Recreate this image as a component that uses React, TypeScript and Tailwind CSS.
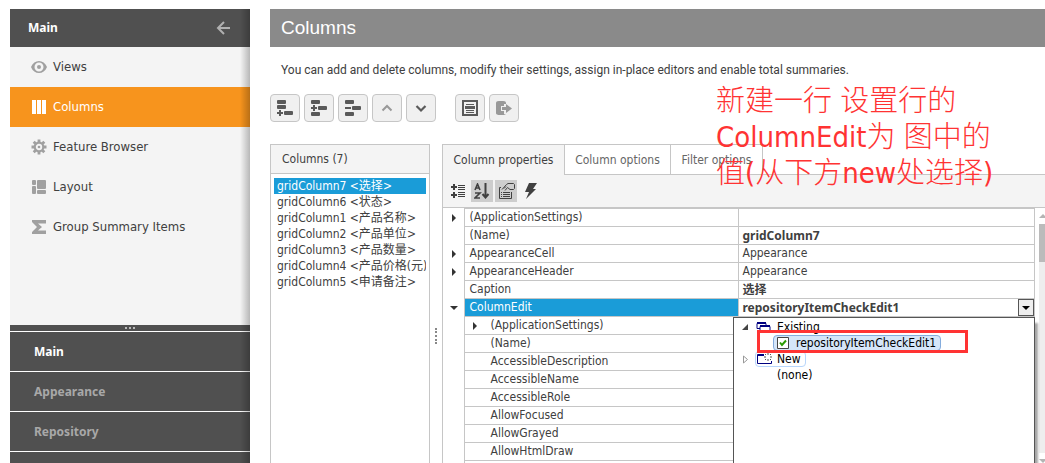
import type { ReactNode } from "react";

const cx = (...c: (string | false)[]) => c.filter(Boolean).join(" ");

const nav: { label: string; icon: ReactNode; active?: boolean }[] = [
  {
    label: "Views",
    icon: (
      <path fillRule="evenodd" d="M0 8C3 0 13 0 16 8C13 16 3 16 0 8ZM8 3.5A4.5 4.5 0 1 0 8 12.5A4.5 4.5 0 1 0 8 3.5ZM8 6A2 2 0 1 1 8 10A2 2 0 1 1 8 6Z" />
    ),
  },
  { label: "Columns", active: true, icon: <path d="M1 1h4v14H1zM6 1h4v14H6zM11 1h4v14h-4z" /> },
  {
    label: "Feature Browser",
    icon: (
      <>
        <circle cx="8" cy="8" r="4.3" fill="none" stroke="currentColor" strokeWidth="2.2" />
        <circle cx="8" cy="8" r="1.3" />
        <g stroke="currentColor" strokeWidth="2.8">
          <path d="M8 .5v3M8 12.500v3M.5 8h3M12.500 8h3M2.700 2.700l2 2M11.300 11.300l2 2M13.300 2.700l-2 2M4.700 11.300l-2 2" />
        </g>
      </>
    ),
  },
  {
    label: "Layout",
    icon: (
      <>
        <rect x="1" y="1" width="4" height="5" rx="1" />
        <rect x="1" y="7" width="4" height="8" rx="1" />
        <rect x="6" y="1" width="9" height="9" rx="1" />
        <rect x="6" y="11" width="9" height="4" rx="1" />
      </>
    ),
  },
  { label: "Group Summary Items", icon: <path d="M1 1h14v3.500H7L11 8l-4 3.500h8V15H1v-2l5-5-5-5z" /> },
];

const columns = [
  ["gridColumn7", "选择"],
  ["gridColumn6", "状态"],
  ["gridColumn1", "产品名称"],
  ["gridColumn2", "产品单位"],
  ["gridColumn3", "产品数量"],
  ["gridColumn4", "产品价格(元)"],
  ["gridColumn5", "申请备注"],
];

type Row = { name: string; value?: string; bold?: boolean; arrow?: "right" | "down"; child?: boolean; selected?: boolean };
const rows: Row[] = [
  { name: "(ApplicationSettings)", arrow: "right" },
  { name: "(Name)", value: "gridColumn7", bold: true },
  { name: "AppearanceCell", value: "Appearance", arrow: "right" },
  { name: "AppearanceHeader", value: "Appearance", arrow: "right" },
  { name: "Caption", value: "选择", bold: true },
  { name: "ColumnEdit", value: "repositoryItemCheckEdit1", bold: true, arrow: "down", selected: true },
  { name: "(ApplicationSettings)", arrow: "right", child: true },
  { name: "(Name)", child: true },
  { name: "AccessibleDescription", child: true },
  { name: "AccessibleName", child: true },
  { name: "AccessibleRole", child: true },
  { name: "AllowFocused", child: true },
  { name: "AllowGrayed", child: true },
  { name: "AllowHtmlDraw", child: true },
  { name: "", child: true },
];

const tools: { label: string; icon: ReactNode; gap?: boolean; faded?: boolean }[] = [
  {
    label: "Add column",
    icon: (
      <>
        <rect x="0" y="0" width="9" height="4" rx="1" />
        <rect x="0" y="5" width="9" height="4" rx="1" />
        <rect x="7" y="11" width="9" height="4" rx="1" />
        <path d="M2 10h2v2h2v2H4v2H2v-2H0v-2h2z" />
      </>
    ),
  },
  {
    label: "Insert column",
    icon: (
      <>
        <rect x="0" y="0" width="9" height="4" rx="1" />
        <rect x="7" y="6" width="9" height="4" rx="1" />
        <rect x="0" y="12" width="9" height="4" rx="1" />
        <path d="M2 5h2v2h2v2H4v2H2V9H0V7h2z" />
      </>
    ),
  },
  {
    label: "Remove column",
    icon: (
      <>
        <rect x="0" y="0" width="9" height="4" rx="1" />
        <rect x="7" y="6" width="9" height="4" rx="1" />
        <rect x="0" y="12" width="9" height="4" rx="1" />
        <path d="M0 7h6v2H0z" />
      </>
    ),
  },
  { label: "Move up", faded: true, icon: <path d="M3.500 10.500L8 6l4.500 4.500" fill="none" stroke="currentColor" strokeWidth="2" /> },
  { label: "Move down", icon: <path d="M3.500 6L8 10.500L12.500 6" fill="none" stroke="currentColor" strokeWidth="2.2" /> },
  {
    label: "Show fields",
    gap: true,
    icon: <path fillRule="evenodd" d="M0 0h16v16H0zM2 2v12h12V2zM4 4h8v1H4zM3 6h10v3H3zM4 10h8v1H4zM4 12h8v1H4z" />,
  },
  {
    label: "Export",
    faded: true,
    icon: <path d="M0 3C0 1 2 1 5 1s5 0 5 2v1H8v2H5v5h3v3h2c-1 1-3 1-5 1s-5 0-5-2zM6 7h4V4l6 4.500L10 13v-3H6z" />,
  },
];

function Arrow({ dir }: { dir: "right" | "down" }) {
  return (
    <svg viewBox="0 0 8 8" className="size-2 text-[#333]" fill="currentColor" aria-hidden="true">
      <path d={dir === "right" ? "M2 0l4 4-4 4z" : "M0 2h8l-4 4z"} />
    </svg>
  );
}

function Sidebar() {
  return (
    <aside className="relative flex w-60 shrink-0 flex-col overflow-hidden bg-[#f4f4f4] text-[#404040]">
      <header className="flex h-[38px] shrink-0 items-center justify-between bg-[#505050] pr-5 pl-[18px] font-['Noto_Sans',sans-serif] text-[12px] font-bold text-white">
        Main
        <button aria-label="Collapse" className="text-[#b0b0b0]">
          <svg viewBox="0 0 14 14" className="size-3.5" fill="none" stroke="currentColor" strokeWidth="2" aria-hidden="true">
            <path d="M14 7H2M8 1L2 7l6 6" />
          </svg>
        </button>
      </header>
      <nav className="flex flex-1 flex-col text-[13px]">
        {nav.map((n) => (
          <a
            key={n.label}
            href="#"
            className={cx("flex h-10 items-center gap-1.5 pl-[21px]", !!n.active && "bg-[#f7941d] text-white")}
          >
            <svg viewBox="0 0 16 16" className={cx("size-4", n.active ? "text-white" : "text-[#a0a0a0]")} fill="currentColor" aria-hidden="true">
              {n.icon}
            </svg>
            {n.label}
          </a>
        ))}
      </nav>
      <div className="flex h-1.5 shrink-0 items-center justify-center gap-0.5 bg-[#505050]">
        <i className="size-0.5 bg-[#bbb]" />
        <i className="size-0.5 bg-[#bbb]" />
        <i className="size-0.5 bg-[#bbb]" />
      </div>
      {["Main", "Appearance", "Repository"].map((s, i) => (
        <button
          key={s}
          className={cx(
            "flex h-10 shrink-0 items-center border-t border-white bg-[#505050] pl-6 font-['Noto_Sans',sans-serif] text-[12px] font-bold",
            i === 0 ? "text-white" : "text-[#a8a8a8]",
          )}
        >
          {s}
        </button>
      ))}
      <div className="h-3 shrink-0 border-t border-white bg-[#505050]" />
      <div className="pointer-events-none absolute inset-y-0 right-0 w-2.5 bg-linear-to-r from-transparent to-black/25" />
    </aside>
  );
}

function ColumnList() {
  return (
    <section className="flex w-40 shrink-0 flex-col border border-b-0 border-[#c6c6c6]">
      <h2 className="flex h-[29px] shrink-0 items-center border-b border-[#c6c6c6] bg-[#f4f4f4] pl-[11px]">Columns (7)</h2>
      <ul className="px-[3px] pt-1">
        {columns.map(([id, caption], i) => (
          <li key={id} className={cx("h-4 overflow-hidden pl-[3px] leading-4 whitespace-nowrap", i === 0 && "bg-[#1a9cd8] text-white")}>
            {id} &lt;{caption}&gt;
          </li>
        ))}
      </ul>
    </section>
  );
}

function Popup() {
  return (
    <div className="absolute top-[109px] right-0 bottom-0 left-[290px] border border-b-0 border-[#555] bg-white pt-[1px] text-black shadow-[3px_6px_2px_rgba(0,0,0,0.35)]">
      <ul role="tree" className="leading-4">
        <li className="flex h-4 items-center pl-2">
          <svg viewBox="0 0 7 7" className="mr-2 size-1.5" fill="#444" aria-hidden="true"><path d="M7 0v7H0z" /></svg>
          <svg viewBox="0 0 15 11" className="mr-1.5 h-[11px] w-[15px]" fill="white" stroke="#000080" aria-hidden="true">
            <path d="M1 1.500h9v5H1zM1 .5h9" /><path d="M4 4.500h10v5H4zM4 3.500h10" />
          </svg>
          Existing
        </li>
        <li className="ml-[39px] flex h-4 w-[168px] items-center rounded-sm border border-[#84acdd] bg-[#d5e6f9]">
          <label className="flex items-center gap-[7px] pl-[3px] whitespace-nowrap">
            <input type="checkbox" defaultChecked className="peer sr-only" />
            <svg viewBox="0 0 12 12" className="size-3" aria-hidden="true">
              <path d="M.5.5h11v11H.5z" fill="white" stroke="#444" />
              <path d="M3 5.500l2 2.500 4-4.500" fill="none" stroke="#2a9a00" strokeWidth="2" />
            </svg>
            repositoryItemCheckEdit1
          </label>
        </li>
        <li className="flex h-4 items-center pl-2">
          <svg viewBox="0 0 7 9" className="mr-1.5 h-[9px] w-[7px]" fill="white" stroke="#999" aria-hidden="true"><path d="M1.500 1l4 3.500-4 3.500z" /></svg>
          <span className="flex h-4 items-center rounded-sm border border-[#b8d6fb] pr-1">
            <svg viewBox="0 0 17 12" className="mr-1 h-3 w-[17px]" fill="none" aria-hidden="true">
              <path d="M8 1.500H1.500v9h14V8M1 2.500h7" stroke="#000080" />
              <path d="M12 0v2M12 6v2M8 4h2M14 4h2M9 1l1 1M15 1l-1 1M9 7l1-1M15 7l-1-1" stroke="#555" />
            </svg>
            New
          </span>
        </li>
        <li className="h-4 pl-[43px]">(none)</li>
      </ul>
      <div className="absolute top-3 left-[23px] h-[23px] w-[211px] border-3 border-[#ff3333]" />
    </div>
  );
}

function Properties() {
  return (
    <section className="flex min-w-0 flex-1 flex-col border-l border-[#c6c6c6]">
      <div role="tablist" className="flex h-[31px] shrink-0 bg-white whitespace-nowrap text-[#666]">
        <button role="tab" aria-selected="true" className="w-[122px] border-t border-r border-[#c6c6c6] bg-[#f4f4f4] text-[#404040]">Column properties</button>
        <button role="tab" className="w-[106px] border-y border-r border-[#c6c6c6]">Column options</button>
        <button role="tab" className="w-[92px] border-y border-r border-[#c6c6c6]">Filter options</button>
        <div className="flex-1 border-b border-[#c6c6c6]" />
      </div>
      <div className="flex h-8 shrink-0 items-center bg-[#f4f4f4] pl-2 text-[#404040]">
        <button aria-label="Categorized" className="mr-1.5">
          <svg viewBox="0 0 14 14" className="size-3.5" fill="currentColor" aria-hidden="true">
            <path d="M2 0h2v2h2v2H4v2H2V4H0V2h2zM2 8h2v2h2v2H4v2H2v-2H0v-2h2zM7 1h7v1H7zM7 3h7v1H7zM7 5h7v1H7zM7 8h7v1H7zM7 10h7v1H7zM7 12h7v1H7z" />
          </svg>
        </button>
        <button aria-label="Sort A to Z" className="mr-0.5 flex size-[22px] items-center justify-center bg-[#cdcdcd]">
          <svg viewBox="0 0 16 16" className="size-4" fill="none" stroke="currentColor" aria-hidden="true">
            <path d="M1 7l2.500-6L6 7M2 5h3M1 10h5l-5 5h5" strokeWidth="1.600" />
            <path d="M11.500 0v13M8.500 11l3 3.500 3-3.500" strokeWidth="2" />
          </svg>
        </button>
        <button aria-label="Property pages" className="mr-2 flex size-[22px] items-center justify-center bg-[#cdcdcd]">
          <svg viewBox="0 0 17 16" className="h-4 w-[17px]" fill="none" stroke="currentColor" aria-hidden="true">
            <path d="M3 4.500H1.500v11h12V9M3 9.500h1M5 9.500h7M3 11.500h1M5 11.500h7M3 13.500h1M5 13.500h7" />
            <path d="M4 6.500L8.500 1.500 10 .5h5.500l1 1v4l-1 1H12L9.500 4.500 7 7.500M6 5.500l2-2" />
          </svg>
        </button>
        <button aria-label="Events">
          <svg viewBox="0 0 12 16" className="h-4 w-3" fill="currentColor" aria-hidden="true"><path d="M4 0h8L8 6h3L1 16l3-7H0z" /></svg>
        </button>
      </div>
      <div className="relative flex min-h-0 flex-1 border-t border-[#c6c6c6]">
        <div className="min-w-0 flex-1 overflow-hidden">
          <table className="w-full table-fixed border-collapse">
            <colgroup><col className="w-[21px]" /><col className="w-[274px]" /><col /></colgroup>
            <tbody>
              {rows.map((r, i) => (
                <tr key={i} className="h-[18px]">
                  <td className="border-r border-[#c6c6c6] p-0 pl-[7px]">{r.arrow && !r.child && <Arrow dir={r.arrow} />}</td>
                  <td className={cx("border border-[#c6c6c6] p-0 leading-[17px]", !!r.selected && "bg-[#1a9cd8] text-white")}>
                    <div className="flex items-center pl-[5px]">
                      {r.child && <span className="w-[21px] pl-[1px]">{r.arrow && <Arrow dir={r.arrow} />}</span>}
                      {r.name}
                    </div>
                  </td>
                  <td className={cx("border border-[#c6c6c6] p-0 leading-[17px]", !!r.bold && "font-['Noto_Sans','Noto_Sans_CJK_SC',sans-serif] font-bold")}>
                    <div className="flex h-[17px] items-center justify-between pl-1">
                      {r.value}
                      {r.selected && (
                        <button aria-label="Open editor list" className="flex h-[17px] w-4 items-center justify-center border border-[#555] bg-[#eee]">
                          <svg viewBox="0 0 8 4" className="h-1 w-2" aria-hidden="true"><path d="M0 0h8L4 4z" /></svg>
                        </button>
                      )}
                    </div>
                  </td>
                </tr>
              ))}
            </tbody>
          </table>
        </div>
        <div className="flex w-2.5 shrink-0 flex-col pl-1">
          <svg viewBox="0 0 6 4" className="my-1.5 h-1 w-1.5 shrink-0" fill="#b4b4b4" aria-hidden="true"><path d="M0 4l4-4 2 2v2z" /></svg>
          <div className="h-[38px] shrink-0 bg-[#bbb]" />
          <div className="flex-1 bg-[#eee]" />
          <svg viewBox="0 0 6 4" className="mt-1.5 h-1 w-1.5 shrink-0" fill="#b4b4b4" aria-hidden="true"><path d="M0 0h6v2L4 4z" /></svg>
        </div>
        <div className="pointer-events-none absolute inset-y-0 right-2.5 left-0"><Popup /></div>
      </div>
    </section>
  );
}

export default function App() {
  return (
    <div className="relative flex h-screen overflow-hidden bg-white pt-[9px] pl-2.5 font-['DejaVu_Sans_Condensed','Noto_Sans_CJK_SC',sans-serif] text-[12px] text-[#404040]">
      <Sidebar />
      <main className="flex min-w-0 flex-1 flex-col pl-5">
        <h1 className="flex h-[38px] shrink-0 items-center bg-[#8a8a8a] pl-[11px] font-['Liberation_Sans',sans-serif] text-[19px] text-white">Columns</h1>
        <p className="flex h-[45px] shrink-0 items-center pl-[11px] font-['Roboto',sans-serif] whitespace-nowrap">
          You can add and delete columns, modify their settings, assign in-place editors and enable total summaries.
        </p>
        <div className="flex shrink-0 gap-1 pt-0.5">
          {tools.map((t) => (
            <button
              key={t.label}
              aria-label={t.label}
              className={cx(
                "flex h-7 w-[30px] items-center justify-center rounded-sm border border-[#c6c6c6] bg-[#f0f0f0]",
                t.faded ? "text-[#999]" : "text-[#5a5a5a]",
                !!t.gap && "ml-[15px]",
              )}
            >
              <svg viewBox="0 0 16 16" className="size-4" fill="currentColor" aria-hidden="true">{t.icon}</svg>
            </button>
          ))}
        </div>
        <div className="flex min-h-0 flex-1 pt-[22px]">
          <ColumnList />
          <div className="flex w-3 shrink-0 items-center justify-center">
            <div className="mt-16 h-4 border-l-2 border-dotted border-[#888]" />
          </div>
          <Properties />
        </div>
      </main>
      <p className="pointer-events-none absolute top-[83px] left-[716px] text-[29px] leading-9 font-light whitespace-nowrap text-[#ff3333]">
        新建一行 设置行的
        <br />
        ColumnEdit为 图中的
        <br />
        值(从下方new处选择)
      </p>
    </div>
  );
}
